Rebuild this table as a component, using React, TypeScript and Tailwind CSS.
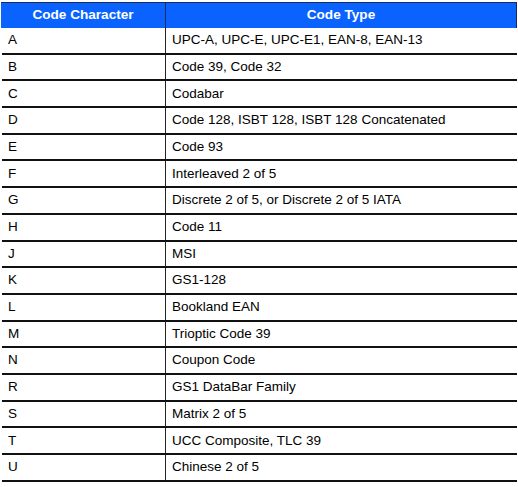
import React from 'react';

const rows: [string, string][] = [
  ['A', 'UPC-A, UPC-E, UPC-E1, EAN-8, EAN-13'],
  ['B', 'Code 39, Code 32'],
  ['C', 'Codabar'],
  ['D', 'Code 128, ISBT 128, ISBT 128 Concatenated'],
  ['E', 'Code 93'],
  ['F', 'Interleaved 2 of 5'],
  ['G', 'Discrete 2 of 5, or Discrete 2 of 5 IATA'],
  ['H', 'Code 11'],
  ['J', 'MSI'],
  ['K', 'GS1-128'],
  ['L', 'Bookland EAN'],
  ['M', 'Trioptic Code 39'],
  ['N', 'Coupon Code'],
  ['R', 'GS1 DataBar Family'],
  ['S', 'Matrix 2 of 5'],
  ['T', 'UCC Composite, TLC 39'],
  ['U', 'Chinese 2 of 5'],
];

export default function App() {
  return (
    <div className="w-[518px] h-[487px] bg-white pt-[2px] font-['Liberation_Sans',Arial,sans-serif] text-[13.5px] text-black">
      {/* header */}
      <div className="ml-[1px] mr-[1px] grid grid-cols-[165px_1fr] h-[26px] bg-[#0a63ff] border-t border-r border-[#1a2a5a] text-white font-bold text-[13.6px]">
        <div className="flex items-center justify-center border-r border-[#1a2a5a]">Code Character</div>
        <div className="flex items-center justify-center">Code Type</div>
      </div>

      {/* rows */}
      <div className="ml-[2px] mr-[1px]">
        {rows.map(([ch, type]) => (
          <div key={ch} className="grid grid-cols-[164px_1fr] h-[26.7px] border-b-2 border-[#111]">
            <div className="flex items-center pl-[6px] border-r border-[#222]">{ch}</div>
            <div className="flex items-center pl-[6px]">{type}</div>
          </div>
        ))}
      </div>
    </div>
  );
}
